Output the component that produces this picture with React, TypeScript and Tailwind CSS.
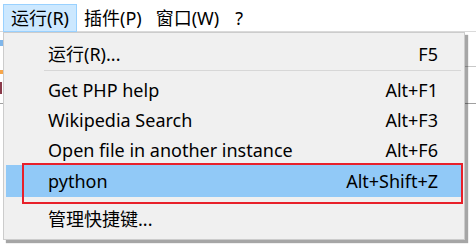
import React from "react"

const font = { fontFamily: '"Noto Sans", "Noto Sans CJK SC", sans-serif' }

interface ItemProps {
    label: string
    shortcut?: string
    active?: boolean
    tall?: boolean
}

const MenuItem = ({ label, shortcut, active, tall }: ItemProps) => (
    <div className={`flex items-center ${tall ? "h-[32px]" : "h-[30px]"} mx-[2px] pl-[42px] pr-[24px] text-[18px] leading-none text-black ${active ? "bg-[#91c9f7]" : ""}`}>
        <span className="flex-1 whitespace-nowrap">{label}</span>
        {shortcut && <span className="whitespace-nowrap">{shortcut}</span>}
    </div>
)

export default function App() {
    return (
        <div className="relative w-[476px] h-[245px] bg-white overflow-hidden" style={font}>
            <div className="flex items-center h-[32px] pt-[4px] pl-[3px] text-[18px] leading-none text-black border-b border-[#dadada]">
                <div className="h-[28px] px-[7px] flex items-center bg-[#cce8ff] border border-[#99d1ff]">运行(R)</div>
                <div className="h-[28px] pl-[7px] pr-[7px] flex items-center">插件(P)</div>
                <div className="h-[28px] pl-[7px] pr-[7px] flex items-center">窗口(W)</div>
                <div className="h-[28px] pl-[9px] flex items-center">?</div>
            </div>

            {/* underlying window content */}
            <div className="flex flex-col">
                <div className="h-[6px] w-[3px] mt-[8px] bg-[#7fb6ea]" />
                <div className="h-[4px] w-[3px] mt-[24px] bg-[#f7a64a]" />
                <div className="h-[12px] w-[2px] mt-[8px] bg-[#8a3a4a]" />
                <div className="h-px w-full mt-[9px] bg-[#a0a0a0]" />
            </div>
            <div className="absolute left-[464px] right-0 top-[66px] h-px bg-[#c8c8c8]" />

            {/* dropdown */}
            <div className="absolute left-[3px] top-[32px] w-[462px] h-[208px] bg-[#f0f0f0] border border-[#cccccc] shadow-[3px_3px_1px_rgba(0,0,0,0.35)]">
                <div className="pt-[6px]">
                    <MenuItem label="运行(R)..." shortcut="F5" />
                    <div className="h-px bg-[#d7d7d7] ml-[40px] mr-[3px] mt-[1px] mb-[4px]" />
                    <MenuItem label="Get PHP help" shortcut="Alt+F1" />
                    <MenuItem label="Wikipedia Search" shortcut="Alt+F3" />
                    <MenuItem label="Open file in another instance" shortcut="Alt+F6" />
                    <MenuItem label="python" shortcut="Alt+Shift+Z" active tall />
                    <div className="h-[7px]" />
                    <MenuItem label="管理快捷键..." />
                </div>
            </div>

            {/* red annotation box */}
            <div className="absolute left-[22px] top-[163px] w-[441px] h-[41px] border-2 border-[#e8202a]" />
        </div>
    )
}
